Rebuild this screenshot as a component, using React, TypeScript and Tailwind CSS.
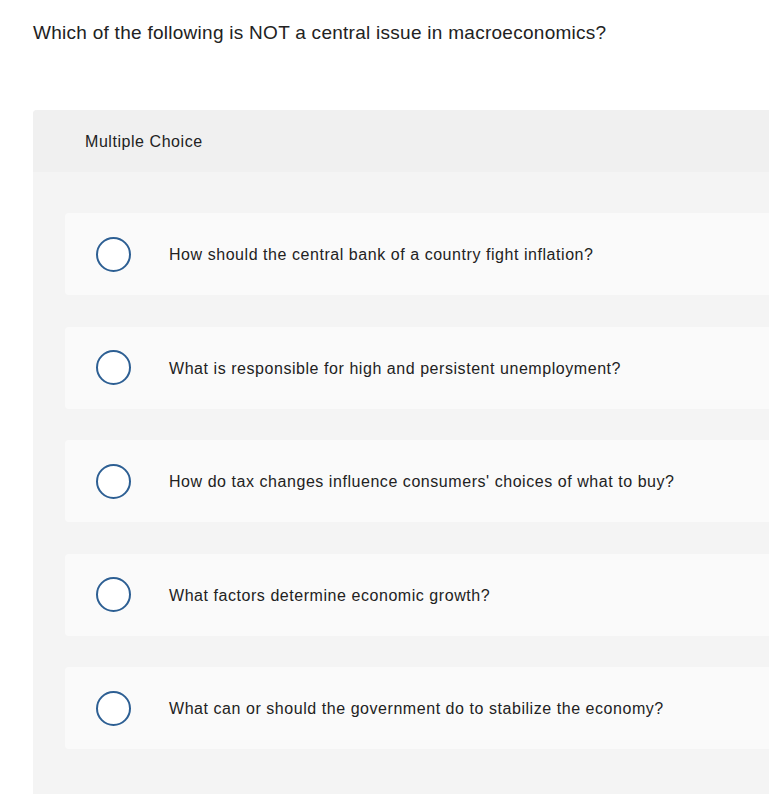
const options = [
  "How should the central bank of a country fight inflation?",
  "What is responsible for high and persistent unemployment?",
  "How do tax changes influence consumers' choices of what to buy?",
  "What factors determine economic growth?",
  "What can or should the government do to stabilize the economy?",
];

export default function App() {
  return (
    <div
      className="min-h-screen w-full overflow-hidden bg-white text-[#222]"
      style={{ fontFamily: '"Liberation Sans", Arial, sans-serif' }}
    >
      <h1 className="pl-[33px] pt-[20px] text-[19px] leading-[26px] font-normal tracking-[0.27px]">
        Which of the following is NOT a central issue in macroeconomics?
      </h1>

      <div className="ml-[33px] mt-[64px] w-[800px] rounded-tl-[4px] bg-[#f4f4f4]">
        <div className="flex h-[62px] items-center rounded-tl-[4px] bg-[#f0f0f0] pl-[52px] pt-[2px] text-[16px] tracking-[0.55px]">
          Multiple Choice
        </div>

        <div className="flex flex-col gap-[31.5px] pl-[32px] pt-[41px] pb-[46px]">
          {options.map((text) => (
            <label
              key={text}
              className="flex h-[82px] cursor-pointer items-center rounded-l-[4px] bg-[#fafafa]"
            >
              <span className="ml-[31px] block h-[35px] w-[35px] shrink-0 rounded-full border-[2px] border-[#2d5f93] bg-white" />
              <span className="ml-[38px] pt-[2px] text-[16px] tracking-[0.55px]">{text}</span>
            </label>
          ))}
        </div>
      </div>
    </div>
  );
}
